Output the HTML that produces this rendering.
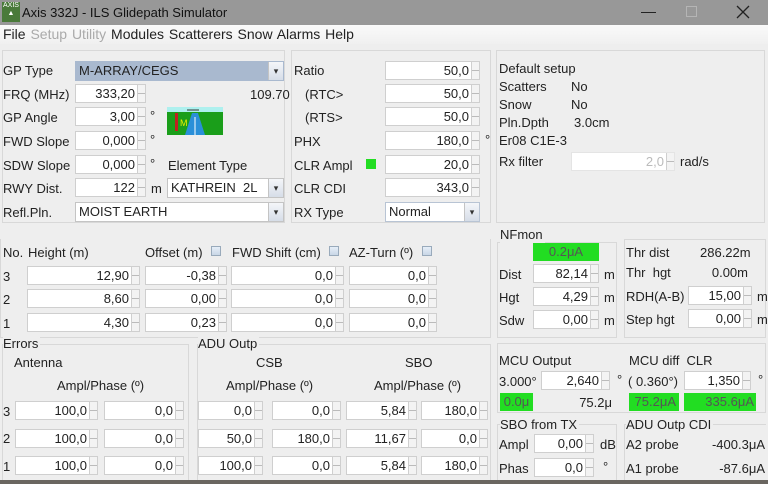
<!DOCTYPE html>
<html><head><meta charset="utf-8"><style>
*{box-sizing:border-box;margin:0;padding:0}
body{width:768px;height:484px;overflow:hidden;background:#eeeeee;font-family:"Liberation Sans",sans-serif;font-size:13px;color:#222;position:relative}
.a{position:absolute;white-space:nowrap}
.t{position:absolute;white-space:nowrap;line-height:16px}
.f{position:absolute;background:#fff;border:1px solid #cfcfcf;text-align:right;padding-right:10px;height:19px;line-height:17px;font-size:13px}
.f::after{content:"";position:absolute;right:0;top:0;width:7px;height:17px;border-left:1px solid #cfcfcf;background:linear-gradient(#f3f3f3 0 8px,#bbb 8px 9px,#f3f3f3 9px)}
.dd{position:absolute;background:#fff;border:1px solid #c4c4c4;height:20px;line-height:18px;padding-left:3px;font-size:13px}
.dd::after{content:"▾";position:absolute;right:0;top:0;width:14px;height:18px;background:linear-gradient(#f4f6f9,#d6dde8);border-left:1px solid #c4c4c4;text-align:center;font-size:9px;color:#333}
.p{position:absolute;border:1px solid #d8d8d8}
.g{position:absolute;background:#22dd22;height:18px;line-height:18px;font-size:13px;color:#555}
.cb{position:absolute;width:10px;height:10px;border:1px solid #9ab;background:linear-gradient(#e6eef8,#c9d6e6)}
</style></head><body>
<div class="a" style="left:0;top:0;width:768px;height:25px;background:#989898"></div>
<div class="a" style="left:2px;top:2px;width:18px;height:20px;background:#4a7a3a;color:#fff;font-size:7px;line-height:8px;text-align:center">AXIS<br>▲</div>
<div class="t" style="left:22px;top:5px;font-size:13px;color:#111">Axis 332J - ILS Glidepath Simulator</div>
<div class="a" style="left:641px;top:12px;width:15px;height:1px;background:#222"></div>
<div class="a" style="left:686px;top:6px;width:11px;height:11px;border:1px solid #b5b5b5"></div>
<svg class="a" style="left:736px;top:5px" width="14" height="14"><path d="M1 1L13 13M13 1L1 13" stroke="#222" stroke-width="1.3"/></svg>
<div class="a" style="left:0;top:25px;width:768px;height:19px;background:linear-gradient(#fafafa,#f0f0f0)"></div>
<div class="t" style="left:3px;top:26px;font-size:14px;word-spacing:1px">File <span style="color:#aaa">Setup</span> <span style="color:#aaa">Utility</span> Modules Scatterers Snow Alarms Help</div>

<div class="p" style="left:2px;top:50px;width:283px;height:173px"></div>
<div class="p" style="left:291px;top:50px;width:200px;height:173px"></div>
<div class="p" style="left:496px;top:50px;width:269px;height:173px"></div>

<div class="t" style="left:3px;top:63px">GP Type</div>
<div class="dd" style="left:75px;top:61px;width:209px;background:#a9b9cf;border-color:#a9b9cf">M-ARRAY/CEGS</div>
<div class="t" style="left:3px;top:87px">FRQ (MHz)</div><div class="f" style="left:75px;top:84px;width:71px">333,20</div>
<div class="t" style="left:250px;top:87px">109.70</div>
<div class="t" style="left:3px;top:110px">GP Angle</div><div class="f" style="left:75px;top:107px;width:71px">3,00</div><div class="t" style="left:150px;top:108px">°</div>
<div class="t" style="left:3px;top:134px">FWD Slope</div><div class="f" style="left:75px;top:131px;width:71px">0,000</div><div class="t" style="left:150px;top:132px">°</div>
<div class="t" style="left:3px;top:158px">SDW Slope</div><div class="f" style="left:75px;top:155px;width:71px">0,000</div><div class="t" style="left:150px;top:156px">°</div>
<div class="t" style="left:3px;top:181px">RWY Dist.</div><div class="f" style="left:75px;top:178px;width:71px">122</div><div class="t" style="left:151px;top:181px">m</div>
<div class="t" style="left:3px;top:205px">Refl.Pln.</div><div class="dd" style="left:75px;top:202px;width:209px">MOIST EARTH</div>
<svg class="a" style="left:167px;top:107px" width="56" height="28"><rect width="56" height="28" fill="#1a9e1a"/><rect width="56" height="5" fill="#aef0ee"/><line x1="20" y1="3" x2="32" y2="3" stroke="#333"/><polygon points="25,6 31,6 38,28 18,28" fill="#2a8fd8"/><line x1="28" y1="10" x2="28" y2="28" stroke="#fff"/><rect x="8" y="6" width="3" height="18" fill="#c02020"/><text x="13" y="19" font-size="9" fill="#ee0" font-family="Liberation Sans">M</text></svg>
<div class="t" style="left:168px;top:158px">Element Type</div>
<div class="dd" style="left:167px;top:178px;width:117px">KATHREIN&nbsp; 2L</div>

<div class="t" style="left:294px;top:63px">Ratio</div><div class="f" style="left:385px;top:61px;width:95px">50,0</div>
<div class="t" style="left:305px;top:87px">(RTC&gt;</div><div class="f" style="left:385px;top:84px;width:95px">50,0</div>
<div class="t" style="left:305px;top:110px">(RTS&gt;</div><div class="f" style="left:385px;top:107px;width:95px">50,0</div>
<div class="t" style="left:294px;top:134px">PHX</div><div class="f" style="left:385px;top:131px;width:95px">180,0</div><div class="t" style="left:485px;top:132px">°</div>
<div class="t" style="left:294px;top:158px">CLR Ampl</div><div class="a" style="left:366px;top:159px;width:10px;height:10px;background:#22dd22"></div><div class="f" style="left:385px;top:155px;width:95px">20,0</div>
<div class="t" style="left:294px;top:181px">CLR CDI</div><div class="f" style="left:385px;top:178px;width:95px">343,0</div>
<div class="t" style="left:294px;top:205px">RX Type</div><div class="dd" style="left:385px;top:202px;width:95px;border-color:#b8c4d4">Normal</div>

<div class="t" style="left:499px;top:61px">Default setup</div>
<div class="t" style="left:499px;top:79px">Scatters</div><div class="t" style="left:571px;top:79px">No</div>
<div class="t" style="left:499px;top:97px">Snow</div><div class="t" style="left:571px;top:97px">No</div>
<div class="t" style="left:499px;top:115px">Pln.Dpth</div><div class="t" style="left:574px;top:115px">3.0cm</div>
<div class="t" style="left:499px;top:133px">Er08 C1E-3</div>
<div class="t" style="left:499px;top:154px">Rx filter</div><div class="f" style="left:571px;top:152px;width:104px;color:#bbb;border-color:#e4e4e4">2,0</div><div class="t" style="left:680px;top:154px">rad/s</div>

<div class="p" style="left:0;top:239px;width:491px;height:99px;border-top:none"></div>
<div class="t" style="left:3px;top:245px">No.</div><div class="t" style="left:28px;top:245px">Height (m)</div>
<div class="t" style="left:145px;top:245px">Offset (m)</div><div class="cb" style="left:211px;top:246px"></div>
<div class="t" style="left:232px;top:245px">FWD Shift (cm)</div><div class="cb" style="left:329px;top:246px"></div>
<div class="t" style="left:349px;top:245px">AZ-Turn (º)</div><div class="cb" style="left:422px;top:246px"></div>
<div class="t" style="left:3px;top:269px">3</div><div class="t" style="left:3px;top:292px">2</div><div class="t" style="left:3px;top:316px">1</div>
<div class="f" style="left:27px;top:266px;width:113px">12,90</div><div class="f" style="left:145px;top:266px;width:82px">-0,38</div><div class="f" style="left:231px;top:266px;width:113px">0,0</div><div class="f" style="left:349px;top:266px;width:88px">0,0</div>
<div class="f" style="left:27px;top:289px;width:113px">8,60</div><div class="f" style="left:145px;top:289px;width:82px">0,00</div><div class="f" style="left:231px;top:289px;width:113px">0,0</div><div class="f" style="left:349px;top:289px;width:88px">0,0</div>
<div class="f" style="left:27px;top:313px;width:113px">4,30</div><div class="f" style="left:145px;top:313px;width:82px">0,23</div><div class="f" style="left:231px;top:313px;width:113px">0,0</div><div class="f" style="left:349px;top:313px;width:88px">0,0</div>

<div class="p" style="left:497px;top:242px;width:120px;height:96px"></div>
<div class="t" style="left:500px;top:227px;background:#eee;padding-right:2px">NFmon</div>
<div class="g" style="left:533px;top:243px;width:66px;text-align:center">0.2μA</div>
<div class="t" style="left:499px;top:267px">Dist</div><div class="f" style="left:533px;top:264px;width:66px">82,14</div><div class="t" style="left:604px;top:267px">m</div>
<div class="t" style="left:499px;top:290px">Hgt</div><div class="f" style="left:533px;top:287px;width:66px">4,29</div><div class="t" style="left:604px;top:290px">m</div>
<div class="t" style="left:499px;top:313px">Sdw</div><div class="f" style="left:533px;top:310px;width:66px">0,00</div><div class="t" style="left:604px;top:313px">m</div>
<div class="p" style="left:624px;top:239px;width:142px;height:99px"></div>
<div class="t" style="left:626px;top:245px">Thr dist</div><div class="t" style="left:700px;top:245px;width:48px;text-align:right">286.22m</div>
<div class="t" style="left:626px;top:265px">Thr&nbsp; hgt</div><div class="t" style="left:700px;top:265px;width:48px;text-align:right">0.00m</div>
<div class="t" style="left:626px;top:289px">RDH(A-B)</div><div class="f" style="left:688px;top:286px;width:64px">15,00</div><div class="t" style="left:757px;top:289px">m</div>
<div class="t" style="left:626px;top:312px">Step hgt</div><div class="f" style="left:688px;top:309px;width:64px">0,00</div><div class="t" style="left:757px;top:312px">m</div>

<div class="p" style="left:2px;top:344px;width:187px;height:137px"></div>
<div class="t" style="left:3px;top:336px;background:#eee;padding-right:2px">Errors</div>
<div class="t" style="left:14px;top:355px">Antenna</div>
<div class="t" style="left:57px;top:378px">Ampl/Phase (º)</div>
<div class="t" style="left:3px;top:404px">3</div><div class="t" style="left:3px;top:431px">2</div><div class="t" style="left:3px;top:459px">1</div>
<div class="f" style="left:15px;top:401px;width:83px">100,0</div><div class="f" style="left:104px;top:401px;width:80px">0,0</div>
<div class="f" style="left:15px;top:429px;width:83px">100,0</div><div class="f" style="left:104px;top:429px;width:80px">0,0</div>
<div class="f" style="left:15px;top:456px;width:83px">100,0</div><div class="f" style="left:104px;top:456px;width:80px">0,0</div>

<div class="p" style="left:197px;top:344px;width:294px;height:137px"></div>
<div class="t" style="left:198px;top:336px;background:#eee;padding-right:2px">ADU Outp</div>
<div class="t" style="left:256px;top:355px">CSB</div><div class="t" style="left:405px;top:355px">SBO</div>
<div class="t" style="left:226px;top:378px">Ampl/Phase (º)</div><div class="t" style="left:374px;top:378px">Ampl/Phase (º)</div>
<div class="f" style="left:198px;top:401px;width:65px">0,0</div><div class="f" style="left:272px;top:401px;width:69px">0,0</div><div class="f" style="left:346px;top:401px;width:71px">5,84</div><div class="f" style="left:421px;top:401px;width:67px">180,0</div>
<div class="f" style="left:198px;top:429px;width:65px">50,0</div><div class="f" style="left:272px;top:429px;width:69px">180,0</div><div class="f" style="left:346px;top:429px;width:71px">11,67</div><div class="f" style="left:421px;top:429px;width:67px">0,0</div>
<div class="f" style="left:198px;top:456px;width:65px">100,0</div><div class="f" style="left:272px;top:456px;width:69px">0,0</div><div class="f" style="left:346px;top:456px;width:71px">5,84</div><div class="f" style="left:421px;top:456px;width:67px">180,0</div>

<div class="p" style="left:497px;top:343px;width:269px;height:70px"></div>
<div class="t" style="left:499px;top:353px">MCU Output</div><div class="t" style="left:629px;top:353px">MCU diff&nbsp; CLR</div>
<div class="t" style="left:499px;top:374px">3.000°</div><div class="f" style="left:541px;top:371px;width:69px">2,640</div><div class="t" style="left:617px;top:372px">°</div>
<div class="t" style="left:628px;top:374px">( 0.360°)</div><div class="f" style="left:684px;top:371px;width:67px">1,350</div><div class="t" style="left:758px;top:372px">°</div>
<div class="g" style="left:500px;top:393px;width:33px;text-align:center">0.0μ</div>
<div class="t" style="left:570px;top:395px;width:42px;text-align:right">75.2μ</div>
<div class="g" style="left:629px;top:393px;width:50px;text-align:right;padding-right:3px">75.2μA</div>
<div class="g" style="left:684px;top:393px;width:72px;text-align:right;padding-right:2px">335.6μA</div>

<div class="p" style="left:497px;top:424px;width:120px;height:57px"></div>
<div class="t" style="left:500px;top:417px;background:#eee;padding-right:2px">SBO from TX</div>
<div class="t" style="left:499px;top:437px">Ampl</div><div class="f" style="left:534px;top:434px;width:60px">0,00</div><div class="t" style="left:600px;top:437px">dB</div>
<div class="t" style="left:499px;top:461px">Phas</div><div class="f" style="left:534px;top:458px;width:60px">0,0</div><div class="t" style="left:603px;top:459px">°</div>
<div class="p" style="left:624px;top:424px;width:142px;height:57px;border-right:none;border-bottom:none"></div>
<div class="t" style="left:626px;top:417px;background:#eee;padding-right:2px">ADU Outp CDI</div>
<div class="t" style="left:626px;top:437px">A2 probe</div><div class="t" style="left:700px;top:437px;width:65px;text-align:right">-400.3μA</div>
<div class="t" style="left:626px;top:461px">A1 probe</div><div class="t" style="left:700px;top:461px;width:65px;text-align:right">-87.6μA</div>

<div class="a" style="left:0;top:480px;width:768px;height:4px;background:#6a6660"></div>
</body></html>
